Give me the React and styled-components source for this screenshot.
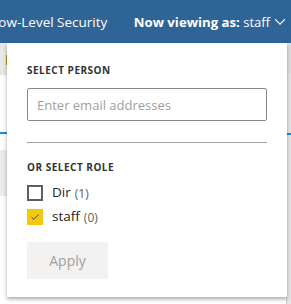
import React from "react";
import styled, { createGlobalStyle } from "styled-components";

const Global = createGlobalStyle`
  html, body { margin: 0; padding: 0; background: #fff; }
  body { font-family: "Open Sans", "Noto Sans", sans-serif; overflow: hidden; }
  * { box-sizing: border-box; }
`;

const Screen = styled.div`
  position: relative;
  width: 291px;
  height: 304px;
  overflow: hidden;
  display: flex;
  flex-direction: column;
`;

const TopBar = styled.header`
  height: 43px;
  flex: none;
  background: #2f6496;
  color: #fff;
  display: flex;
  align-items: center;
  justify-content: space-between;
  padding-right: 5px;
  font-size: 13.5px;
  white-space: nowrap;
`;

const Title = styled.span`
  margin-left: -10px;
`;

const Viewing = styled.span`
  display: flex;
  align-items: center;
  gap: 4px;
  font-size: 13px;
  b { font-weight: 700; font-size: 13.2px; }
`;

const Body = styled.div`
  flex: 1;
  display: flex;
  justify-content: space-between;
`;

const LeftRail = styled.div`
  width: 8px;
  display: flex;
  flex-direction: column;
`;

const RailBlock = styled.div`
  height: ${(p) => p.$h}px;
  background: ${(p) => p.$bg || "transparent"};
  border-right: ${(p) => (p.$mark ? `2px solid ${p.$mark}` : "none")};
`;

const RightRail = styled.div`
  width: 5px;
  background: #e6e6e6;
  border-left: 1px solid #c8c8c8;
  display: flex;
  flex-direction: column;
`;

const Panel = styled.div`
  position: absolute;
  left: 7px;
  top: 43px;
  width: 280px;
  height: 254px;
  background: #fff;
  box-shadow: 0 1.5px 4px rgba(0, 0, 0, 0.35);
  padding: 21px 20px 0 20px;
  display: flex;
  flex-direction: column;
  color: #252423;
`;

const SectionLabel = styled.div`
  font-size: 10px;
  font-weight: 700;
  letter-spacing: 0.5px;
  color: #333;
  line-height: 13px;
`;

const EmailInput = styled.input`
  margin-top: 11px;
  width: 240px;
  height: 33px;
  border: 1px solid #8a8886;
  border-radius: 2px;
  padding: 0 9px;
  font-family: inherit;
  font-size: 13px;
  color: #252423;
  outline: none;
  &::placeholder { color: #a19f9d; }
`;

const Divider = styled.hr`
  margin: 21px 0 0 0;
  width: 240px;
  border: none;
  border-top: 1.5px solid #a19f9d;
`;

const RoleLabel = styled(SectionLabel)`
  margin-top: 18px;
`;

const RoleList = styled.div`
  margin-top: 10px;
  display: flex;
  flex-direction: column;
  gap: 7px;
`;

const RoleRow = styled.label`
  display: flex;
  align-items: center;
  gap: 9px;
  font-size: 13.5px;
  line-height: 16px;
  color: #252423;
`;

const Box = styled.span`
  width: 16px;
  height: 16px;
  flex: none;
  border: ${(p) => (p.$checked ? "none" : "2px solid #605e5c")};
  background: ${(p) => (p.$checked ? "#f2c811" : "#fff")};
  display: flex;
  align-items: center;
  justify-content: center;
`;

const Count = styled.span`
  font-size: 12px;
  color: #605e5c;
  margin-left: 4px;
  position: relative;
  top: 1px;
`;

const ApplyButton = styled.button`
  margin-top: 17px;
  width: 81px;
  height: 37px;
  border: none;
  background: #f3f2f1;
  color: #a19f9d;
  font-family: inherit;
  font-size: 14px;
`;

const Chevron = () => (
  <svg width="12" height="8" viewBox="0 0 12 8" fill="none">
    <path d="M1 1.2 L6 6.2 L11 1.2" stroke="#fff" strokeWidth="1.2" />
  </svg>
);

const Check = () => (
  <svg width="10" height="8" viewBox="0 0 10 8" fill="none">
    <path d="M1.5 4.2 L3.8 6.4 L8.5 1.6" stroke="#3b3a39" strokeWidth="0.9" />
  </svg>
);

const roles = [
  { name: "Dir", count: 1, checked: false },
  { name: "staff", count: 0, checked: true },
];

export default function App() {
  return (
    <>
      <Global />
      <Screen>
        <TopBar>
          <Title>Row-Level Security</Title>
          <Viewing>
            <span>
              <b>Now viewing as:</b> staff
            </span>
            <Chevron />
          </Viewing>
        </TopBar>
        <Body>
          <LeftRail>
            <RailBlock $h={12} $bg="#e8e8e8" />
            <RailBlock $h={10} $bg="#e8e8e8" $mark="#d08b17" />
            <RailBlock $h={10} $bg="#e8e8e8" />
            <RailBlock $h={57} />
            <RailBlock $h={2} $bg="#1e88e5" />
            <RailBlock $h={16} />
            <RailBlock $h={46} $bg="#ececec" />
          </LeftRail>
          <RightRail>
            <RailBlock $h={30} $bg="#e0e0e0" />
            <RailBlock $h={60} />
            <RailBlock $h={2} $bg="#1e88e5" />
          </RightRail>
        </Body>
        <Panel>
          <SectionLabel>SELECT PERSON</SectionLabel>
          <EmailInput placeholder="Enter email addresses" />
          <Divider />
          <RoleLabel>OR SELECT ROLE</RoleLabel>
          <RoleList>
            {roles.map((r) => (
              <RoleRow key={r.name}>
                <Box $checked={r.checked}>{r.checked && <Check />}</Box>
                <span>
                  {r.name}
                  <Count>({r.count})</Count>
                </span>
              </RoleRow>
            ))}
          </RoleList>
          <ApplyButton disabled>Apply</ApplyButton>
        </Panel>
      </Screen>
    </>
  );
}
